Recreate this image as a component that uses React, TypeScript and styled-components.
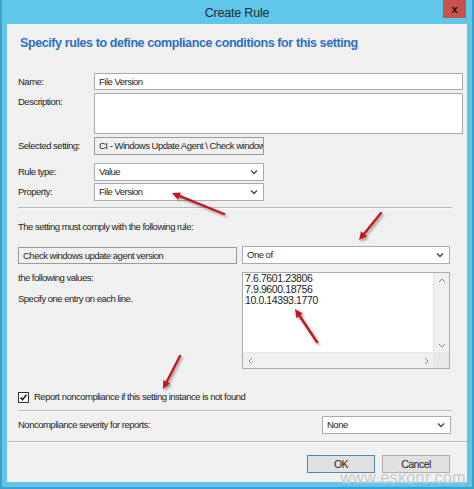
import React from "react";
import styled, { createGlobalStyle } from "styled-components";

const GlobalStyle = createGlobalStyle`
  html, body { margin: 0; padding: 0; background: #ffffff; }
  body {
    font-family: "Liberation Sans", Arial, sans-serif;
    font-size: 9.5px;
    letter-spacing: -0.5px;
    color: #1e1e1e;
  }
`;

const Window = styled.div`
  position: relative;
  width: 474px;
  height: 489px;
  box-sizing: border-box;
  background: #60c6ea;
  border-left: 2px solid #3f9fc9;
  border-right: 2px solid #3f9fc9;
  border-bottom: 2px solid #3f9fc9;
  display: flex;
  flex-direction: column;
`;

const TitleBar = styled.div`
  height: 24px;
  display: grid;
  grid-template-columns: 1fr auto 1fr;
  align-items: start;
`;

const Title = styled.div`
  grid-column: 2;
  margin-top: 6px;
  font-size: 12.5px;
  letter-spacing: -0.2px;
  color: #1c2a33;
`;

const CloseButton = styled.div`
  grid-column: 3;
  justify-self: end;
  margin-right: 6px;
  width: 23px;
  height: 18px;
  background: #c8524d;
  display: flex;
  align-items: center;
  justify-content: center;
  font-weight: bold;
  font-size: 11px;
  letter-spacing: 0;
  color: #111;
`;

const Body = styled.div`
  flex: 1;
  margin: 0 5px 5px;
  background: #f0f0f0;
  display: flex;
  flex-direction: column;
`;

const Heading = styled.div`
  margin: 11px 0 0 13px;
  height: 16px;
  line-height: 16px;
  font-size: 12.5px;
  letter-spacing: -0.4px;
  font-weight: bold;
  color: #2d6fc2;
  white-space: nowrap;
`;

const Row = styled.div<{ $top: number; $left?: number; $right?: number }>`
  display: flex;
  align-items: center;
  margin: ${(p) => p.$top}px ${(p) => p.$right ?? 17}px 0 ${(p) => p.$left ?? 11}px;
`;

const Label = styled.div<{ $w?: number; $alignTop?: boolean }>`
  width: ${(p) => (p.$w ? `${p.$w}px` : "auto")};
  flex: ${(p) => (p.$w ? "none" : "1")};
  align-self: ${(p) => (p.$alignTop ? "flex-start" : "center")};
  padding-top: ${(p) => (p.$alignTop ? "3px" : "0")};
  line-height: 12px;
  white-space: nowrap;
`;

const TextBox = styled.div<{ $w?: number; $h: number; $disabled?: boolean }>`
  box-sizing: border-box;
  width: ${(p) => (p.$w ? `${p.$w}px` : "auto")};
  flex: ${(p) => (p.$w ? "none" : "1")};
  height: ${(p) => p.$h}px;
  border: 1px solid ${(p) => (p.$disabled ? "#9a9a9a" : "#a9abb0")};
  background: ${(p) => (p.$disabled ? "#f0f0f0" : "#ffffff")};
  padding: 2px 4px 0;
  line-height: 12px;
  white-space: nowrap;
  overflow: hidden;
`;

const Select = styled.div<{ $w: number }>`
  box-sizing: border-box;
  width: ${(p) => p.$w}px;
  height: 18px;
  border: 1px solid #a9abb0;
  background: #ffffff;
  display: flex;
  align-items: center;
  justify-content: space-between;
  padding: 0 5px 0 4px;
  line-height: 12px;
`;

const Divider = styled.div<{ $top: number; $full?: boolean }>`
  margin: ${(p) => p.$top}px ${(p) => (p.$full ? 0 : 15)}px 0 ${(p) => (p.$full ? 0 : 11)}px;
  height: 0;
  border-top: 1px solid #b9b9b9;
  border-bottom: 1px solid #fafafa;
`;

const Text = styled.div<{ $top: number }>`
  margin: ${(p) => p.$top}px 0 0 11px;
  line-height: 12px;
`;

const ValuesRow = styled.div`
  display: flex;
  margin: 8px 17px 0 11px;
`;

const ValuesLabels = styled.div`
  flex: 1;
  display: flex;
  flex-direction: column;
  gap: 9px;
  line-height: 12px;
`;

const ListBox = styled.div`
  box-sizing: border-box;
  width: 208px;
  height: 97px;
  border: 1px solid #a9abb0;
  background: #ffffff;
  display: grid;
  grid-template-columns: 1fr 16px;
  grid-template-rows: 1fr 16px;
`;

const ListText = styled.div`
  padding: 0 2px;
  line-height: 11px;
  font-size: 10.5px;
  letter-spacing: -0.4px;
  color: #222;
`;

const ScrollTrack = styled.div<{ $vertical?: boolean }>`
  background: #f0f0f0;
  display: flex;
  flex-direction: ${(p) => (p.$vertical ? "column" : "row")};
  justify-content: space-between;
  align-items: center;
  border-${(p) => (p.$vertical ? "left" : "top")}: 1px solid #e4e4e4;
`;

const ScrollArrow = styled.div`
  width: 15px;
  height: 15px;
  display: flex;
  align-items: center;
  justify-content: center;
`;

const Corner = styled.div`
  background: #e8e8e8;
`;

const CheckRow = styled.div`
  display: flex;
  align-items: center;
  gap: 5px;
  margin: 22px 0 0 11px;
  line-height: 12px;
`;

const CheckBox = styled.div`
  box-sizing: border-box;
  width: 11px;
  height: 11px;
  border: 1px solid #333;
  background: #fff;
  display: flex;
  align-items: center;
  justify-content: center;
`;

const ButtonBar = styled.div`
  display: flex;
  justify-content: flex-end;
  gap: 7px;
  margin: 12px 17px 0 0;
`;

const Button = styled.div<{ $default?: boolean }>`
  box-sizing: border-box;
  width: 68px;
  height: 18px;
  border: 1px solid ${(p) => (p.$default ? "#4a86b8" : "#adadad")};
  background: #e1e1e1;
  display: flex;
  align-items: center;
  justify-content: center;
  font-size: 10.5px;
`;

const Watermark = styled.div`
  position: absolute;
  right: 6px;
  bottom: 1px;
  line-height: 16px;
  font-size: 16px;
  letter-spacing: 0.4px;
  color: #c4c4c4;
  text-shadow: 0 0 2px #ffffff;
`;

const Overlay = styled.svg`
  position: absolute;
  left: 0;
  top: 0;
  pointer-events: none;
`;

const Chevron = () => (
  <svg width="8" height="6" viewBox="0 0 8 6">
    <path d="M1 1.5 L4 4.5 L7 1.5" fill="none" stroke="#444" strokeWidth="1.3" />
  </svg>
);

const Arrow = ({ dir }: { dir: "up" | "down" | "left" | "right" }) => {
  const d = {
    up: "M2 6 L5 3 L8 6",
    down: "M2 4 L5 7 L8 4",
    left: "M6 2 L3 5 L6 8",
    right: "M4 2 L7 5 L4 8",
  }[dir];
  return (
    <svg width="10" height="10" viewBox="0 0 10 10">
      <path d={d} fill="none" stroke="#8a8a8a" strokeWidth="1" />
    </svg>
  );
};

const arrows = [
  { x1: 222, y1: 214, x2: 170, y2: 193 },
  { x1: 379, y1: 213, x2: 357, y2: 240 },
  { x1: 315, y1: 342, x2: 293, y2: 309 },
  { x1: 178, y1: 356, x2: 161, y2: 389 },
];

const RedArrows = () => (
  <Overlay width="474" height="489" viewBox="0 0 474 489">
    <defs>
      <filter id="shadow" x="-50%" y="-50%" width="200%" height="200%">
        <feDropShadow dx="1.5" dy="2" stdDeviation="1.2" floodColor="#000" floodOpacity="0.35" />
      </filter>
    </defs>
    {arrows.map((a, i) => {
      const ang = Math.atan2(a.y2 - a.y1, a.x2 - a.x1);
      const len = 9;
      const spread = 0.45;
      const bx = a.x2 - Math.cos(ang) * len * 0.8;
      const by = a.y2 - Math.sin(ang) * len * 0.8;
      const p1 = `${a.x2},${a.y2}`;
      const p2 = `${a.x2 - Math.cos(ang - spread) * len},${a.y2 - Math.sin(ang - spread) * len}`;
      const p3 = `${a.x2 - Math.cos(ang + spread) * len},${a.y2 - Math.sin(ang + spread) * len}`;
      return (
        <g key={i} filter="url(#shadow)">
          <line x1={a.x1} y1={a.y1} x2={bx} y2={by} stroke="#c4161c" strokeWidth="2.4" strokeLinecap="round" />
          <polygon points={`${p1} ${p2} ${p3}`} fill="#c4161c" />
        </g>
      );
    })}
  </Overlay>
);

export default function App() {
  return (
    <>
      <GlobalStyle />
      <Window>
        <TitleBar>
          <Title>Create Rule</Title>
          <CloseButton>x</CloseButton>
        </TitleBar>
        <Body>
          <Heading>Specify rules to define compliance conditions for this setting</Heading>

          <Row $top={22} $right={4}>
            <Label $w={76}>Name:</Label>
            <TextBox $h={17}>File Version</TextBox>
          </Row>
          <Row $top={3} $right={4}>
            <Label $w={76} $alignTop>Description:</Label>
            <TextBox $h={41} />
          </Row>
          <Row $top={3}>
            <Label $w={76}>Selected setting:</Label>
            <TextBox $w={170} $h={18} $disabled>
              CI - Windows Update Agent \ Check windows update agent version
            </TextBox>
          </Row>
          <Row $top={8}>
            <Label $w={76}>Rule type:</Label>
            <Select $w={170}>
              Value
              <Chevron />
            </Select>
          </Row>
          <Row $top={2}>
            <Label $w={76}>Property:</Label>
            <Select $w={170}>
              File Version
              <Chevron />
            </Select>
          </Row>

          <Divider $top={6} />
          <Text $top={12}>The setting must comply with the following rule:</Text>

          <Row $top={13}>
            <TextBox $w={219} $h={17} $disabled>
              Check windows update agent version
            </TextBox>
            <Label />
            <Select $w={208}>
              One of
              <Chevron />
            </Select>
          </Row>

          <ValuesRow>
            <ValuesLabels>
              <div>the following values:</div>
              <div>Specify one entry on each line.</div>
            </ValuesLabels>
            <ListBox>
              <ListText>
                7.6.7601.23806
                <br />
                7.9.9600.18756
                <br />
                10.0.14393.1770
              </ListText>
              <ScrollTrack $vertical>
                <ScrollArrow><Arrow dir="up" /></ScrollArrow>
                <ScrollArrow><Arrow dir="down" /></ScrollArrow>
              </ScrollTrack>
              <ScrollTrack>
                <ScrollArrow><Arrow dir="left" /></ScrollArrow>
                <ScrollArrow><Arrow dir="right" /></ScrollArrow>
              </ScrollTrack>
              <Corner />
            </ListBox>
          </ValuesRow>

          <CheckRow>
            <CheckBox>
              <svg width="9" height="9" viewBox="0 0 9 9">
                <path d="M1.5 4.5 L3.5 6.8 L7.5 1.8" fill="none" stroke="#222" strokeWidth="1.6" />
              </svg>
            </CheckBox>
            Report noncompliance if this setting instance is not found
          </CheckRow>

          <Divider $top={7} />

          <Row $top={4} $right={16}>
            <Label>Noncompliance severity for reports:</Label>
            <Select $w={129}>
              None
              <Chevron />
            </Select>
          </Row>

          <Divider $top={7} $full />

          <ButtonBar>
            <Button $default>OK</Button>
            <Button>Cancel</Button>
          </ButtonBar>
        </Body>
        <Watermark>www.eskonr.com</Watermark>
        <RedArrows />
      </Window>
    </>
  );
}
